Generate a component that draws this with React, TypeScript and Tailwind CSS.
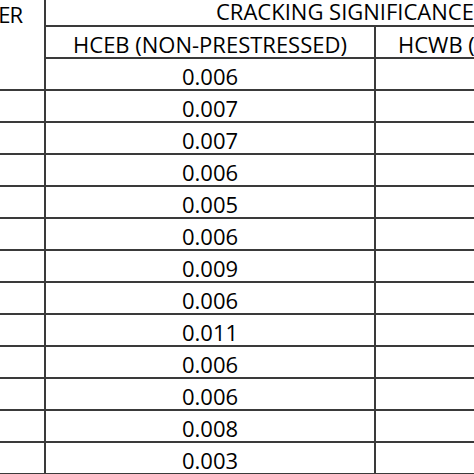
const values = [
  "0.006",
  "0.007",
  "0.007",
  "0.006",
  "0.005",
  "0.006",
  "0.009",
  "0.006",
  "0.011",
  "0.006",
  "0.006",
  "0.008",
  "0.003",
];

const line = "border-[#3a3a3a]";

export default function App() {
  return (
    <div
      className="h-[474px] w-[474px] overflow-hidden bg-white text-[22px] leading-none text-black"
      style={{ fontFamily: '"Open Sans", "Liberation Sans", sans-serif' }}
    >
      <div className="-mt-[5px] w-[700px]">
        {/* header */}
        <div className="flex">
          <div className={`flex h-[64px] w-[46px] shrink-0 justify-end overflow-hidden border-r-2 ${line}`}>
            <span className="mt-[8px] mr-[22px] whitespace-nowrap tracking-[-1px]">MEMBER</span>
          </div>
          <div className="flex flex-col">
            <div className={`flex h-[32px] w-[654px] items-center border-b-2 pt-[2px] pl-[170px] whitespace-nowrap ${line}`}>
              CRACKING SIGNIFICANCE FACTOR
            </div>
            <div className={`flex h-[32px] border-b-2 ${line}`}>
              <div className={`flex w-[330px] items-center justify-center border-r-2 pt-[3px] whitespace-nowrap ${line}`}>
                HCEB (NON-PRESTRESSED)
              </div>
              <div className="flex flex-1 items-center pt-[3px] pl-[22px] whitespace-nowrap">
                HCWB (PRESTRESSED)
              </div>
            </div>
          </div>
        </div>

        {/* data rows */}
        {values.map((v, i) => (
          <div key={i} className={`flex h-[32px] border-b-2 ${line}`}>
            <div className={`w-[46px] shrink-0 border-r-2 ${line}`} />
            <div className={`flex w-[330px] shrink-0 items-center justify-center border-r-2 pt-[3px] ${line}`}>
              {v}
            </div>
            <div className="flex-1" />
          </div>
        ))}
      </div>
    </div>
  );
}
